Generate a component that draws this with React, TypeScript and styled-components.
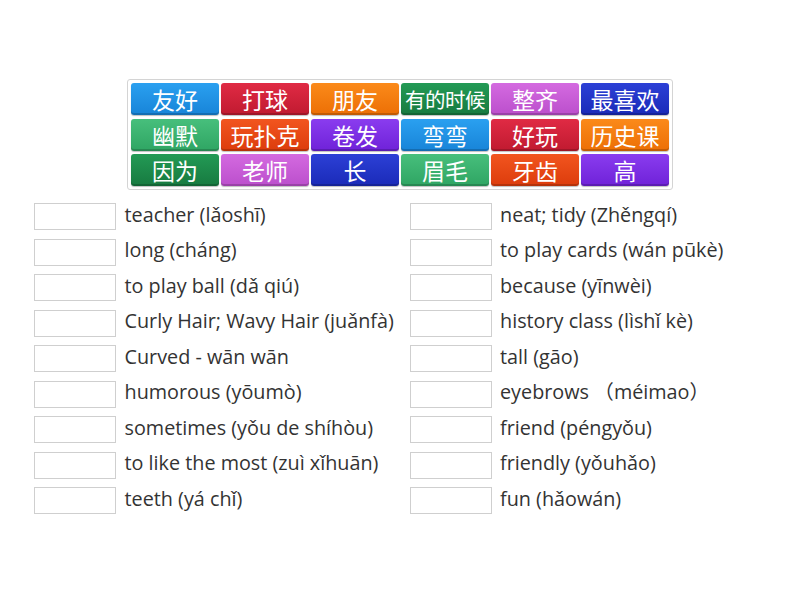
import React from "react";
import styled, { createGlobalStyle } from "styled-components";

const Global = createGlobalStyle`
  html, body { margin: 0; padding: 0; background: #fff; }
  body { font-family: "Open Sans", "Noto Sans CJK SC", sans-serif; }
`;

const Page = styled.div`
  width: 800px;
  height: 600px;
  padding-top: 79px;
  box-sizing: border-box;
`;

const Board = styled.div`
  width: 546px;
  margin: 0 auto;
  box-sizing: border-box;
  border: 1px solid #d4d4d4;
  border-radius: 3px;
  padding: 3px;
  display: grid;
  grid-template-columns: repeat(6, 88px);
  grid-auto-rows: 32px;
  column-gap: 2px;
  row-gap: 3.5px;
`;

const Tile = styled.div<{ $c1: string; $c2: string; $small?: boolean }>`
  border-radius: 3px;
  background: linear-gradient(to bottom, ${(p) => p.$c1}, ${(p) => p.$c2});
  box-shadow: inset 0 -2px 0 rgba(0, 0, 0, 0.18), 0 1px 1px rgba(0, 0, 0, 0.25);
  color: #fff;
  font-family: "Noto Sans CJK SC", sans-serif;
  font-size: ${(p) => (p.$small ? "20.5px" : "23px")};
  line-height: 32px;
  text-align: center;
  white-space: nowrap;
  overflow: hidden;
  letter-spacing: ${(p) => (p.$small ? "-0.5px" : "0")};
`;

const List = styled.div`
  margin-top: 13px;
  padding-left: 34px;
  display: grid;
  grid-template-columns: 375.5px 1fr;
  grid-auto-flow: column;
  grid-template-rows: repeat(9, 27px);
  row-gap: 8.5px;
`;

const Row = styled.div`
  display: flex;
  align-items: center;
  gap: 8.5px;
`;

const Slot = styled.div`
  width: 82px;
  height: 27px;
  box-sizing: border-box;
  border: 1px solid #cfcfcf;
  background: #fff;
  flex: none;
`;

const Label = styled.span`
  font-family: "Open Sans", "Noto Sans CJK SC", sans-serif;
  font-size: 19.8px;
  color: #333;
  white-space: nowrap;
  line-height: 26px;
  margin-top: -4px;
`;

const C = {
  blue: ["#2aa0f0", "#1884d8"],
  red: ["#e02a44", "#c01a30"],
  orange: ["#fb8a1a", "#ec6f05"],
  green: ["#239a55", "#177a40"],
  pink: ["#d46ae0", "#bb4fcc"],
  navy: ["#2c40d6", "#1a2ab8"],
  mint: ["#47bf7c", "#2fa563"],
  redorange: ["#f2551f", "#dc3c0c"],
  purple: ["#8a3cef", "#6f22d8"],
};

const tiles: { t: string; c: string[]; s?: boolean }[] = [
  { t: "友好", c: C.blue },
  { t: "打球", c: C.red },
  { t: "朋友", c: C.orange },
  { t: "有的时候", c: C.green, s: true },
  { t: "整齐", c: C.pink },
  { t: "最喜欢", c: C.navy },
  { t: "幽默", c: C.mint },
  { t: "玩扑克", c: C.redorange },
  { t: "卷发", c: C.purple },
  { t: "弯弯", c: C.blue },
  { t: "好玩", c: C.red },
  { t: "历史课", c: C.orange },
  { t: "因为", c: C.green },
  { t: "老师", c: C.pink },
  { t: "长", c: C.navy },
  { t: "眉毛", c: C.mint },
  { t: "牙齿", c: C.redorange },
  { t: "高", c: C.purple },
];

const labels = [
  "teacher (lǎoshī)",
  "long (cháng)",
  "to play ball (dǎ qiú)",
  "Curly Hair; Wavy Hair (juǎnfà)",
  "Curved - wān wān",
  "humorous (yōumò)",
  "sometimes (yǒu de shíhòu)",
  "to like the most (zuì xǐhuān)",
  "teeth (yá chǐ)",
  "neat; tidy (Zhěngqí)",
  "to play cards (wán pūkè)",
  "because (yīnwèi)",
  "history class (lìshǐ kè)",
  "tall (gāo)",
  "eyebrows （méimao）",
  "friend (péngyǒu)",
  "friendly (yǒuhǎo)",
  "fun (hǎowán)",
];

export default function App() {
  return (
    <Page>
      <Global />
      <Board>
        {tiles.map((x, i) => (
          <Tile key={i} $c1={x.c[0]} $c2={x.c[1]} $small={x.s}>
            {x.t}
          </Tile>
        ))}
      </Board>
      <List>
        {labels.map((l, i) => (
          <Row key={i}>
            <Slot />
            <Label>{l}</Label>
          </Row>
        ))}
      </List>
    </Page>
  );
}
